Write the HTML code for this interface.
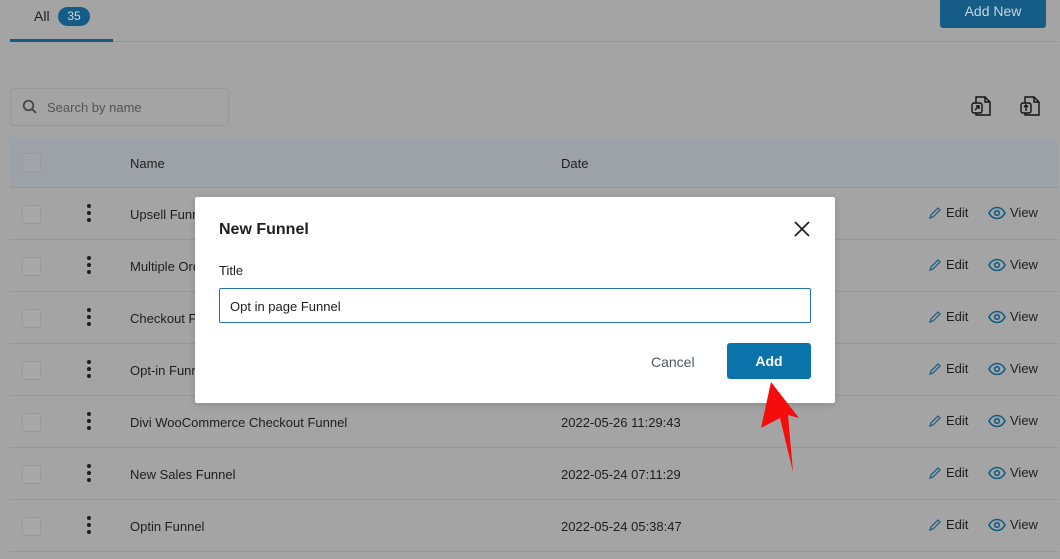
<!DOCTYPE html>
<html><head><meta charset="utf-8"><style>
*{box-sizing:border-box;margin:0;padding:0}
body{width:1060px;height:559px;overflow:hidden;background:#a4a4a4;font-family:"Liberation Sans",sans-serif;color:#1e1e1e;position:relative}
.abs{position:absolute}
.row{position:absolute;left:10px;width:1048px;height:52px;border-bottom:1.5px solid #979797;font-size:13px}
.cb{position:absolute;left:12px;top:17px;width:19px;height:19px;border:1.5px solid #999;border-radius:3px;background:#a8a8a8}
.dots{position:absolute;left:77px;top:16px;width:4px}
.dots i{display:block;width:4px;height:4px;border-radius:2px;background:#1e1e1e;margin-bottom:3px}
.nm{position:absolute;left:120px;top:19px}
.dt{position:absolute;left:551px;top:19px}
.ed{position:absolute;left:918px;top:17px;display:flex;align-items:center;gap:4px}
.vw{position:absolute;left:978px;top:17px;display:flex;align-items:center;gap:4px}
</style></head><body>
<div class="abs" style="left:34px;top:8px;font-size:14px">All</div>
<div class="abs" style="left:58px;top:7px;width:32px;height:19px;border-radius:10px;background:#155c86;color:#cfd8df;font-size:12px;text-align:center;line-height:19px">35</div>
<div class="abs" style="left:10px;top:39px;width:103px;height:3px;background:#155a82"></div>
<div class="abs" style="left:113px;top:41px;width:945px;height:1px;background:#969696"></div>
<div class="abs" style="left:940px;top:0;width:106px;height:28px;background:#155c86;border-radius:0 0 3px 3px;color:#c8d4dd;font-size:14px;text-align:center;line-height:23px">Add New</div>
<div class="abs" style="left:10px;top:88px;width:219px;height:38px;border:1px solid #999;border-radius:4px"></div>
<svg class="abs" style="left:22px;top:99px" width="16" height="16" viewBox="0 0 16 16"><circle cx="6.5" cy="6.5" r="4.8" fill="none" stroke="#444" stroke-width="1.7"/><path d="M10 10l4 4" stroke="#444" stroke-width="1.8"/></svg>
<div class="abs" style="left:47px;top:100px;font-size:13px;color:#555">Search by name</div>
<svg class="abs" style="left:970px;top:94px" width="24" height="24" viewBox="0 0 24 24" fill="none" stroke="#111" stroke-width="1.4"><path d="M6 3h9l5 5v13H6z M15 3v5h5"/><rect x="2" y="9" width="10" height="10" rx="2" fill="#a4a4a4"/><path d="M5 16l4-4M6 12h3v3"/></svg>
<svg class="abs" style="left:1019px;top:94px" width="24" height="24" viewBox="0 0 24 24" fill="none" stroke="#111" stroke-width="1.4"><path d="M6 3h9l5 5v13H6z M15 3v5h5"/><rect x="2" y="9" width="10" height="10" rx="2" fill="#a4a4a4"/><path d="M7 17v-5M5 13l2-2 2 2"/></svg>
<div class="abs" style="left:10px;top:138px;width:1048px;height:50px;background:#9da1a8;border-bottom:1.5px solid #979797;font-size:13px">
<div class="cb" style="top:15px;background:#a1a4aa"></div>
<div class="abs" style="left:120px;top:18px">Name</div>
<div class="abs" style="left:551px;top:18px">Date</div></div>
<div class="row" style="top:188px"><div class="cb"></div><div class="dots"><i></i><i></i><i></i></div><div class="nm">Upsell Funnel</div></div>
<div class="row" style="top:240px"><div class="cb"></div><div class="dots"><i></i><i></i><i></i></div><div class="nm">Multiple Order</div></div>
<div class="row" style="top:292px"><div class="cb"></div><div class="dots"><i></i><i></i><i></i></div><div class="nm">Checkout Funnel</div></div>
<div class="row" style="top:344px"><div class="cb"></div><div class="dots"><i></i><i></i><i></i></div><div class="nm">Opt-in Funnel</div></div>
<div class="row" style="top:396px"><div class="cb"></div><div class="dots"><i></i><i></i><i></i></div><div class="nm">Divi WooCommerce Checkout Funnel</div><div class="dt">2022-05-26 11:29:43</div></div>
<div class="row" style="top:448px"><div class="cb"></div><div class="dots"><i></i><i></i><i></i></div><div class="nm">New Sales Funnel</div><div class="dt">2022-05-24 07:11:29</div></div>
<div class="row" style="top:500px"><div class="cb"></div><div class="dots"><i></i><i></i><i></i></div><div class="nm">Optin Funnel</div><div class="dt">2022-05-24 05:38:47</div></div>
<div id="ev"></div>
<script>
for(var i=0;i<7;i++){var t=188+52*i;document.getElementById('ev').insertAdjacentHTML('beforeend',
'<div class="abs" style="left:928px;top:'+(t+17)+'px;display:flex;align-items:center;gap:4px;font-size:13px"><svg width="14" height="14" viewBox="0 0 14 14"><path d="M2 12l1-3 7-7 2 2-7 7z" fill="none" stroke="#155c86" stroke-width="1.2"/></svg>Edit</div>'+
'<div class="abs" style="left:988px;top:'+(t+17)+'px;display:flex;align-items:center;gap:4px;font-size:13px"><svg width="18" height="14" viewBox="0 0 18 14"><path d="M1 7c2-4 5-5.5 8-5.5S15 3 17 7c-2 4-5 5.5-8 5.5S3 11 1 7z" fill="none" stroke="#155c86" stroke-width="1.6"/><circle cx="9" cy="7" r="2.3" fill="none" stroke="#155c86" stroke-width="1.6"/></svg>View</div>');}
</script>
<div class="abs" style="left:195px;top:197px;width:640px;height:206px;background:#fff;border-radius:2px;box-shadow:0 2px 8px rgba(0,0,0,.15)">
<div class="abs" style="left:24px;top:24px;font-size:16px;font-weight:bold;color:#1e1e1e">New Funnel</div>
<svg class="abs" style="left:598px;top:23px" width="18" height="18" viewBox="0 0 18 18"><path d="M2 2l14 14M16 2L2 16" stroke="#1e1e1e" stroke-width="1.7"/></svg>
<div class="abs" style="left:24px;top:66px;font-size:13px;color:#1e1e1e">Title</div>
<div class="abs" style="left:24px;top:91px;width:592px;height:35px;border:1px solid #2271b1;border-radius:2px;font-size:13px;padding:10px 0 0 10px">Opt in page Funnel</div>
<div class="abs" style="left:456px;top:157px;font-size:14px;color:#50575e">Cancel</div>
<div class="abs" style="left:532px;top:146px;width:84px;height:36px;background:#0a73aa;border-radius:3px;color:#fff;font-size:14px;font-weight:bold;text-align:center;line-height:36px">Add</div>
</div>
<svg class="abs" style="left:755px;top:378px" width="50" height="100" viewBox="0 0 50 100"><path d="M16 4L44 40L33 37L38 94L25 40L6 50Z" fill="#f50d0d"/></svg>
</body></html>
